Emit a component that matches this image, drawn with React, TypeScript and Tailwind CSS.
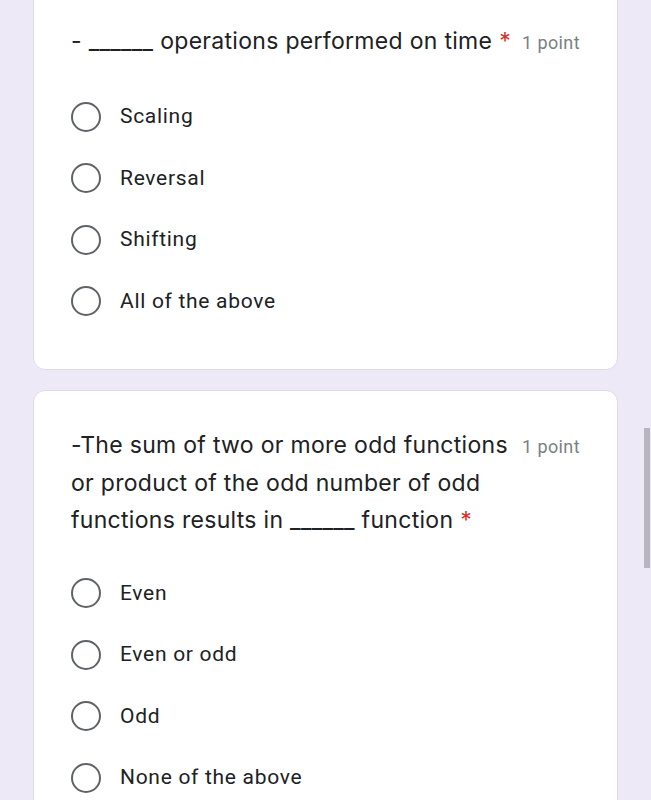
import React from 'react';

const Radio: React.FC<{ label: string }> = ({ label }) => (
  <label className="flex h-[61.5px] items-center">
    <span className="h-[30px] w-[30px] shrink-0 rounded-full border-[2.5px] border-[#5f6368]" />
    <span className="ml-[19px] text-[21px] tracking-[0.7px] text-[#202124] [font-family:Roboto,'Noto_Sans',sans-serif]">
      {label}
    </span>
  </label>
);

const Asterisk = () => <span className="ml-[7px] text-[#d93025]">*</span>;

const Points = () => (
  <span className="ml-[9px] shrink-0 text-[18px] tracking-[0.4px] text-[#7b7f84] [font-family:Roboto,sans-serif]">1 point</span>
);

export default function App() {
  return (
    <div className="relative h-[800px] w-full overflow-hidden bg-[#eee9f7] [font-family:Inter,'Noto_Sans',sans-serif]">
      {/* question 1 (card scrolled partly out of view) */}
      <div className="mx-[33px] mt-[-10px] rounded-b-[12px] border border-[#dedbe6] bg-white px-[37px] pb-[37px] pt-[31px]">
        <div className="flex items-baseline justify-between">
          <p className="flex-1 whitespace-nowrap text-[23px] leading-[38px] tracking-[0.3px] text-[#202124]">
            -&nbsp;______&nbsp;operations performed on time
            <Asterisk />
          </p>
          <Points />
        </div>
        <div className="mt-[26px] flex flex-col">
          <Radio label="Scaling" />
          <Radio label="Reversal" />
          <Radio label="Shifting" />
          <Radio label="All of the above" />
        </div>
      </div>

      {/* question 2 */}
      <div className="mx-[33px] mt-[20px] rounded-[12px] border border-[#dedbe6] bg-white px-[37px] pb-[37px] pt-[36px]">
        <div className="flex items-baseline justify-between">
          <p className="flex-1 text-[23px] leading-[37.5px] tracking-[0.3px] text-[#202124]">
            -The sum of two or more odd functions
            <br />
            or product of the odd number of odd
            <br />
            functions results in ______ function
            <Asterisk />
          </p>
          <Points />
        </div>
        <div className="mt-[23px] flex flex-col">
          <Radio label="Even" />
          <Radio label="Even or odd" />
          <Radio label="Odd" />
          <Radio label="None of the above" />
        </div>
      </div>

      {/* scrollbar thumb */}
      <div className="absolute right-[1px] top-[428px] h-[140px] w-[6px] bg-[#b8b5c0]" />
    </div>
  );
}
